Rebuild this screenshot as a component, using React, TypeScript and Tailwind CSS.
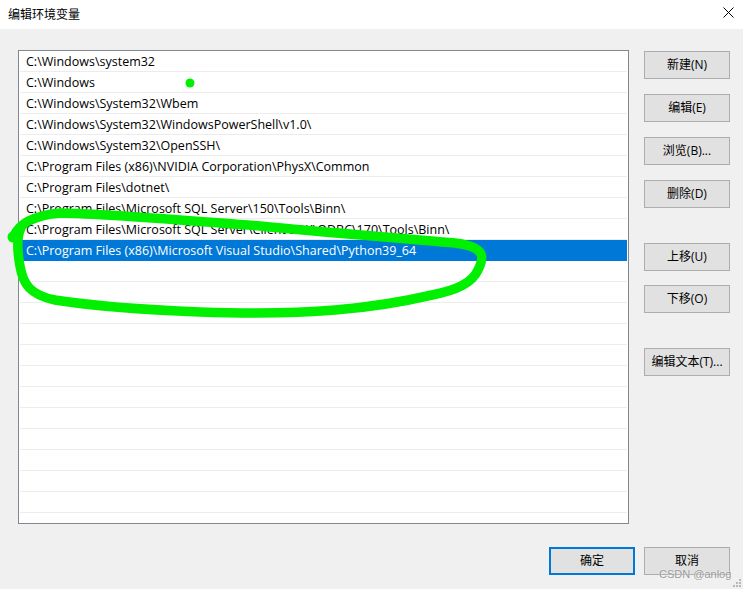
import React from "react";

const paths = [
  "C:\\Windows\\system32",
  "C:\\Windows",
  "C:\\Windows\\System32\\Wbem",
  "C:\\Windows\\System32\\WindowsPowerShell\\v1.0\\",
  "C:\\Windows\\System32\\OpenSSH\\",
  "C:\\Program Files (x86)\\NVIDIA Corporation\\PhysX\\Common",
  "C:\\Program Files\\dotnet\\",
  "C:\\Program Files\\Microsoft SQL Server\\150\\Tools\\Binn\\",
  "C:\\Program Files\\Microsoft SQL Server\\Client SDK\\ODBC\\170\\Tools\\Binn\\",
  "C:\\Program Files (x86)\\Microsoft Visual Studio\\Shared\\Python39_64",
];

const TOTAL_ROWS = 23;

const Btn = ({ label, focused }: { label: string; focused?: boolean }) => (
  <button
    className={
      focused
        ? "w-[86px] h-[28px] bg-[#e1e1e1] border-2 border-[#0078d7] text-[12px] text-black"
        : "w-[86px] h-[28px] bg-[#e1e1e1] border border-[#adadad] text-[12px] text-black"
    }
  >
    {label}
  </button>
);

export default function App() {
  const rows = Array.from({ length: TOTAL_ROWS }, (_, i) => paths[i] ?? "");

  return (
    <div
      className="relative w-[743px] h-[589px] overflow-hidden bg-[#f0f0f0] text-black"
      style={{ fontFamily: '"Open Sans", "Noto Sans CJK SC", sans-serif' }}
    >
      {/* title bar */}
      <div className="flex h-[29px] items-center justify-between bg-white pl-[8px] pr-[9px]">
        <span className="text-[12px]">编辑环境变量</span>
        <svg width="11" height="11" viewBox="0 0 11 11" className="mb-[4px]">
          <path d="M0.5 0.5 L10.5 10.5 M10.5 0.5 L0.5 10.5" stroke="#000" strokeWidth="1" />
        </svg>
      </div>

      {/* body */}
      <div className="flex pl-[18px] pt-[21px]">
        <div className="h-[474px] w-[611px] overflow-hidden border border-[#828790] bg-white px-[1px]">
          {rows.map((p, i) => (
            <div
              key={i}
              className={
                i === 9
                  ? "flex h-[21px] items-center border-b border-[#0078d7] bg-[#0078d7] pl-[6px] pt-[2px] text-[12.5px] text-white"
                  : "flex h-[21px] items-center border-b border-[#ececec] pl-[6px] pt-[2px] text-[12.5px]"
              }
            >
              {p}
            </div>
          ))}
        </div>

        <div className="ml-[15px] flex flex-col pt-[1px]">
          <div className="flex flex-col gap-[15px]">
            <Btn label="新建(N)" />
            <Btn label="编辑(E)" />
            <Btn label="浏览(B)..." />
            <Btn label="删除(D)" />
          </div>
          <div className="mt-[35px] flex flex-col gap-[14px]">
            <Btn label="上移(U)" />
            <Btn label="下移(O)" />
          </div>
          <div className="mt-[35px]">
            <Btn label="编辑文本(T)..." />
          </div>
        </div>
      </div>

      {/* footer */}
      <div className="mt-[23px] flex justify-end gap-[9px] pr-[13px]">
        <Btn label="确定" focused />
        <Btn label="取消" />
      </div>

      {/* watermark */}
      <span
        className="pointer-events-none absolute left-[659px] top-[566px] text-[11px] text-[#9a9a9a] [text-shadow:0_0_2px_#fff]"
        style={{ fontFamily: '"Liberation Sans", sans-serif' }}
      >
        CSDN @anlog
      </span>

      {/* resize grip */}
      <svg className="absolute right-[2px] bottom-[2px]" width="8" height="8" viewBox="0 0 8 8">
        <rect x="6" y="0" width="2" height="2" fill="#b8b8b8" />
        <rect x="3" y="3" width="2" height="2" fill="#b8b8b8" />
        <rect x="6" y="3" width="2" height="2" fill="#b8b8b8" />
        <rect x="0" y="6" width="2" height="2" fill="#b8b8b8" />
        <rect x="3" y="6" width="2" height="2" fill="#b8b8b8" />
        <rect x="6" y="6" width="2" height="2" fill="#b8b8b8" />
      </svg>

      {/* hand-drawn annotation */}
      <svg
        className="pointer-events-none absolute left-0 top-0"
        width="743"
        height="589"
        viewBox="0 0 743 589"
      >
        <circle cx="190" cy="83" r="4.5" fill="#00f000" />
        <circle cx="13" cy="237" r="5.5" fill="#00f000" />
        <path
          d="M14 236 C18 226 30 216 60 213 C110 214 180 220 260 226 C320 232 400 238 455 243 C487 247 484 258 478 270 C472 283 457 290 432 295 C402 302 372 307 335 310 C300 313 260 314 200 312 C150 310 100 307 55 300 C30 295 23 284 20 266 C17 250 17 236 21 228"
          fill="none"
          stroke="#00f000"
          strokeWidth="9.5"
          strokeLinecap="round"
          strokeLinejoin="round"
        />
      </svg>
    </div>
  );
}
